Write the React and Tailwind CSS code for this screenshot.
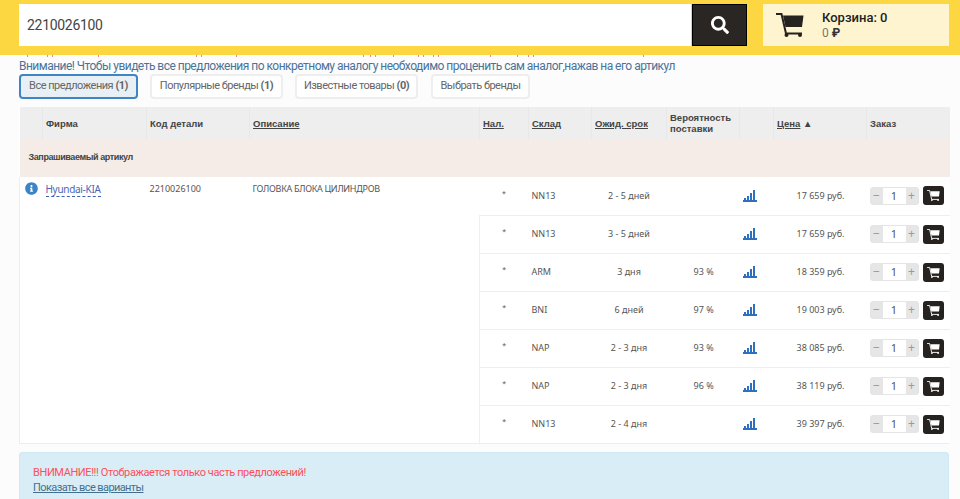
import React from "react";
import { FaSearch, FaInfoCircle } from "react-icons/fa";

const rows = [
  { stock: "NN13", term: "2 - 5 дней", chance: "", price: "17 659 руб." },
  { stock: "NN13", term: "3 - 5 дней", chance: "", price: "17 659 руб." },
  { stock: "ARM", term: "3 дня", chance: "93 %", price: "18 359 руб." },
  { stock: "BNI", term: "6 дней", chance: "97 %", price: "19 003 руб." },
  { stock: "NAP", term: "2 - 3 дня", chance: "93 %", price: "38 085 руб." },
  { stock: "NAP", term: "2 - 3 дня", chance: "96 %", price: "38 119 руб." },
  { stock: "NN13", term: "2 - 4 дня", chance: "", price: "39 397 руб." },
];

// descenders of the line hidden under the header
const specks = [27, 47, 52, 98, 196, 201, 236, 363, 370, 375, 393, 418, 423, 433, 438, 490, 517, 528, 533, 643];

const CartIcon = ({ className }) => (
  <svg viewBox="0 0 28 24" className={className} fill="currentColor">
    <path d="M0 1H5.5L10 20.5H26" fill="none" stroke="currentColor" strokeWidth="2" />
    <path d="M7 2.5H27.5L26 14H9.5Z" />
    <circle cx="10.5" cy="22" r="2" />
    <circle cx="24" cy="22" r="2" />
  </svg>
);

const OfferCells = ({ row }) => (
  <>
    <td className="border-b border-[#eee] pb-[4px] text-center align-middle text-[7px]">*</td>
    <td className="border-b border-[#eee] pl-[3px] align-middle">{row.stock}</td>
    <td className="border-b border-[#eee] text-center align-middle">{row.term}</td>
    <td className="border-b border-[#eee] pl-[27px] align-middle">{row.chance}</td>
    <td className="border-b border-[#eee] pl-[3px] align-middle">
      <div className="flex h-[12px] w-[14px] items-end justify-center gap-px border-b-2 border-[#2f6fc0]">
        <span className="h-[2px] w-[2px] bg-[#2f6fc0]" />
        <span className="h-[4px] w-[2px] bg-[#2f6fc0]" />
        <span className="h-[7px] w-[2px] bg-[#2f6fc0]" />
        <span className="h-[10px] w-[2px] bg-[#2f6fc0]" />
      </div>
    </td>
    <td className="border-b border-[#eee] pl-[23px] align-middle">{row.price}</td>
    <td className="border-b border-[#eee] align-middle">
      <div className="flex items-center pl-[3px]">
        <div className="flex h-[18px] w-[49px] overflow-hidden rounded-[3px] border border-[#e4e4e4] bg-[#e6e6e6] text-[#999]">
          <span className="flex w-[12px] items-center justify-center text-[12px]">−</span>
          <span className="flex-1 bg-white text-center text-[11px] leading-[16px] text-[#555]">1</span>
          <span className="flex w-[12px] items-center justify-center text-[12px]">+</span>
        </div>
        <button className="ml-[4px] flex h-[19px] w-[21px] items-center justify-center rounded-[3px] bg-[#26221f] text-white">
          <CartIcon className="h-[11px] w-[13px]" />
        </button>
      </div>
    </td>
  </>
);

const App = () => {
  return (
    <div className="h-[499px] overflow-hidden bg-[#fcfcfc] font-['Noto_Sans',sans-serif] text-[#555]">
      {/* Header */}
      <div className="flex h-[55px] bg-[#fdd741] pl-[19px] pt-[4px]">
        <div className="flex h-[42px] w-[672px] items-center bg-white pl-[8px] font-['Roboto',sans-serif] text-[14px] tracking-[-0.3px] text-[#444]">
          2210026100
        </div>
        <button className="ml-px flex h-[42px] w-[55px] items-center justify-center border border-black bg-[#2a2623] text-white">
          <FaSearch size={18} />
        </button>
        <div className="ml-[16px] flex h-[42px] w-[186px] items-center bg-[#fef5d0] pl-[13px]">
          <CartIcon className="h-[24px] w-[28px] text-[#26221f]" />
          <div className="ml-[18px] font-['Roboto',sans-serif] leading-none">
            <div className="text-[13px] font-medium text-[#222]">Корзина: 0</div>
            <div className="mt-[3px] flex gap-[3px] text-[12px] text-[#777]">
              <span>0</span>
              <span className="font-bold text-[#333]">₽</span>
            </div>
          </div>
        </div>
      </div>

      <div aria-hidden="true" className="flex h-[2px]">
        {specks.map((x, i) => (
          <span
            key={x}
            className="h-[2px] w-px bg-[#ff7f8a]"
            style={{ marginLeft: x - (i === 0 ? 0 : specks[i - 1] + 1) }}
          />
        ))}
      </div>

      {/* Links and filters */}
      <div className="pl-[19px] pr-[11px]">
        <p className="mt-[2px] font-['Roboto',sans-serif] text-[12px] leading-[15px] tracking-[-0.52px] text-[#4a7399]">
          Внимание! Чтобы увидеть все предложения по конкретному аналогу необходимо проценить сам аналог,нажав на его артикул
        </p>
        <div className="flex font-['Roboto',sans-serif] text-[11px] tracking-[-0.5px]">
          <button className="h-[25px] w-[119px] rounded-[4px] border-2 border-[#3d85c6] bg-[#e8f0f5] text-[#666]">
            Все предложения <b>(1)</b>
          </button>
          <button className="ml-[12px] h-[25px] w-[133px] rounded-[4px] border-2 border-[#eee] bg-white text-[#666]">
            Популярные бренды <b>(1)</b>
          </button>
          <button className="ml-[12px] h-[25px] w-[123px] rounded-[4px] border-2 border-[#eee] bg-white text-[#666]">
            Известные товары <b>(0)</b>
          </button>
          <button className="ml-[13px] h-[25px] w-[99px] rounded-[4px] border-2 border-[#eee] bg-white text-[#666]">
            Выбрать бренды
          </button>
        </div>

        {/* Offers table */}
        <table className="mt-[8px] w-[930px] table-fixed border-collapse bg-white text-[9px]">
          <colgroup>
            <col className="w-[23px]" />
            <col className="w-[104px]" />
            <col className="w-[103px]" />
            <col className="w-[230px]" />
            <col className="w-[49px]" />
            <col className="w-[63px]" />
            <col className="w-[75px]" />
            <col className="w-[73px]" />
            <col className="w-[34px]" />
            <col className="w-[93px]" />
            <col className="w-[83px]" />
          </colgroup>
          <thead>
            <tr className="h-[32px] bg-[#eee] text-left font-['Liberation_Sans',sans-serif] text-[9.5px] leading-[11px] text-[#444]">
              <th className="border-r border-[#e8e8e8]" />
              <th className="border-r border-[#e8e8e8] pl-[3px] font-bold">Фирма</th>
              <th className="border-r border-[#e8e8e8] pl-[3px] font-bold">Код детали</th>
              <th className="border-r border-[#e8e8e8] pl-[3px] font-bold underline">Описание</th>
              <th className="border-r border-[#e8e8e8] pl-[3px] font-bold underline">Нал.</th>
              <th className="border-r border-[#e8e8e8] pl-[3px] font-bold underline">Склад</th>
              <th className="border-r border-[#e8e8e8] pl-[3px] font-bold underline">Ожид. срок</th>
              <th className="border-r border-[#e8e8e8] pl-[3px] font-bold">Вероятность поставки</th>
              <th className="border-r border-[#e8e8e8]" />
              <th className="border-r border-[#e8e8e8] pl-[3px] font-bold">
                <span className="underline">Цена</span> ▲
              </th>
              <th className="pl-[3px] font-bold">Заказ</th>
            </tr>
          </thead>
          <tbody>
            <tr className="h-[38px] bg-[#f5ece7]">
              <td colSpan={11} className="pl-[9px] font-['Liberation_Sans',sans-serif] text-[9px] font-bold tracking-[-0.4px] text-[#444]">
                Запрашиваемый артикул
              </td>
            </tr>
            <tr className="h-[38px]">
              <td className="border-l border-[#eee] pl-[5px] pt-[5px] align-top">
                <FaInfoCircle size={13} className="text-[#3a85c8]" />
              </td>
              <td className="pl-[3px] pt-[5px] align-top">
                <span className="border-b border-dashed border-[#3f5fb0] text-[10px] tracking-[-0.3px] text-[#4b66b8]">Hyundai-KIA</span>
              </td>
              <td className="pl-[3px] pt-[5px] align-top">2210026100</td>
              <td className="pl-[3px] pt-[5px] align-top tracking-[-0.3px]">ГОЛОВКА БЛОКА ЦИЛИНДРОВ</td>
              <OfferCells row={rows[0]} />
            </tr>
            {rows.slice(1).map((row, i) => (
              <tr key={i} className="h-[38px]">
                {i === 0 && (
                  <td colSpan={4} rowSpan={6} className="border-b border-l border-r border-[#eee]" />
                )}
                <OfferCells row={row} />
              </tr>
            ))}
          </tbody>
        </table>

        {/* Notice */}
        <div className="mt-[8px] h-[60px] w-[930px] rounded-t-[3px] border border-[#cfe8f3] bg-[#d9edf7] pl-[13px] pt-[12px] font-['Roboto',sans-serif] text-[11px] leading-[15px]">
          <div className="tracking-[-0.4px] text-[#ff4d5a]">ВНИМАНИЕ!!! Отображается только часть предложений!</div>
          <a className="tracking-[-0.6px] text-[#44708f] underline">Показать все варианты</a>
        </div>
      </div>
    </div>
  );
};

export default App;
